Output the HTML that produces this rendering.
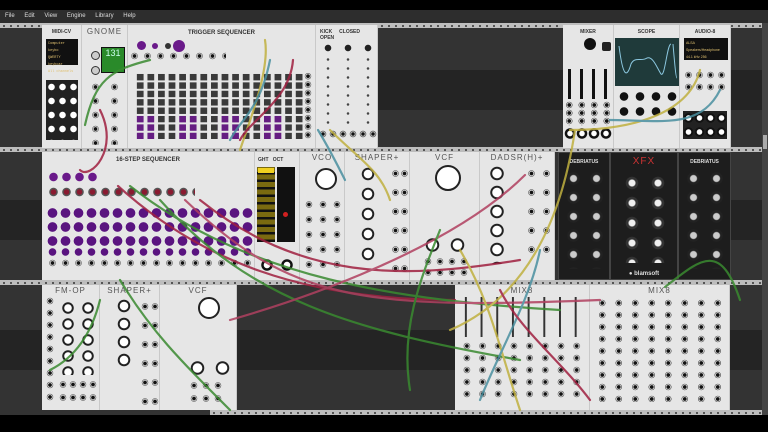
<!DOCTYPE html>
<html><head><style>
*{margin:0;padding:0;box-sizing:border-box}
body{width:768px;height:432px;overflow:hidden;background:#262626;font-family:"Liberation Sans",sans-serif;position:relative}
.a{position:absolute}
.top{left:0;top:0;width:768px;height:10px;background:#000}
.menu{left:0;top:10px;width:768px;height:13px;background:#2d2d2d;color:#ddd;font-size:6px;line-height:13px;padding-left:5px;word-spacing:8px}
.rail{height:5px;background:#bdbdbd repeating-linear-gradient(90deg,#bdbdbd 0 3px,#555 3px 5px,#bdbdbd 5px 7px);background-size:7px 2px;background-repeat:repeat-x;background-position:0 1.5px}
.row{background:#333}
.strip{background:#242424;height:40px}
.p{background:#e6e6e6;border-right:1px solid #c9c9c9}
.t{position:absolute;width:100%;text-align:center;color:#333;font-weight:bold;font-size:5px}
.T{position:absolute;width:100%;text-align:center;color:#555;font-size:8px;letter-spacing:1px}
.blk{background:#1d1d1d;border:1px solid #444}
.grid{background-image:radial-gradient(circle,#111 1.6px,#fff 2.2px,#444 3px,transparent 3.4px)}
</style></head><body>
<div class="a top"></div>
<div class="a menu">File Edit View Engine Library Help</div>
<div class="a row" style="left:0;top:23px;width:768px;height:392px"></div>
<div class="a strip" style="left:0;top:70px;width:768px"></div>
<div class="a strip" style="left:0;top:200px;width:768px"></div>
<div class="a strip" style="left:0;top:330px;width:768px"></div>
<div class="a rail" style="left:0;top:23px;width:762px"></div>
<div class="a rail" style="left:0;top:147px;width:762px"></div>
<div class="a rail" style="left:0;top:280px;width:762px"></div>
<div class="a rail" style="left:210px;top:410px;width:552px"></div>
<div class="a" style="left:0;top:415px;width:768px;height:17px;background:#000"></div>
<div class="a" style="left:762px;top:23px;width:6px;height:392px;background:#444"></div>
<div class="a" style="left:763px;top:135px;width:4px;height:14px;background:#aaa"></div>

<!-- ROW 1 -->
<div class="a p" style="left:42px;top:25px;width:40px;height:123px">
 <div class="t" style="top:4px">MIDI-CV</div>
 <div class="a" style="left:4px;top:14px;width:32px;height:26px;background:#111;color:#e0c070;font-size:3.5px;line-height:7px;padding:2px;font-family:'Liberation Mono',monospace">Computer keybo<br>QWERTY keyboar<br>All channels</div>
 <div class="a" style="left:4px;top:55px;width:32px;height:60px;background:#222 ;background-image:radial-gradient(circle,#fff 3px,#222 3.5px);background-size:11px 14px"></div>
</div>
<div class="a p" style="left:82px;top:25px;width:46px;height:123px">
 <div class="T" style="top:2px">GNOME</div>
 <div class="a" style="left:19px;top:22px;width:24px;height:26px;background:#2a8a2a;border:1px solid #111;color:#cfe;font-size:9px;text-align:center">131</div>
 <div class="a" style="left:9px;top:26px;width:9px;height:9px;border-radius:50%;background:#ccc;border:1px solid #333"></div>
 <div class="a" style="left:9px;top:41px;width:9px;height:9px;border-radius:50%;background:#ccc;border:1px solid #333"></div>
 <div class="a grid" style="left:4px;top:55px;width:38px;height:65px;background-size:19px 14px"></div>
</div>
<div class="a p" style="left:128px;top:25px;width:188px;height:123px">
 <div class="t" style="top:5px;font-size:6px">TRIGGER SEQUENCER</div>
 <div class="a" style="left:9px;top:16px;width:9px;height:9px;border-radius:50%;background:#6a1a8a"></div>
 <div class="a" style="left:24px;top:18px;width:6px;height:6px;border-radius:50%;background:#6a1a8a"></div>
 <div class="a" style="left:37px;top:18px;width:6px;height:6px;border-radius:50%;background:#333"></div>
 <div class="a" style="left:45px;top:15px;width:12px;height:12px;border-radius:50%;background:#6a1a8a"></div>
 <div class="a grid" style="left:0px;top:27px;width:98px;height:8px;background-size:13px 8px"></div>
 <div class="a" style="left:5px;top:47px;width:170px;height:67px;background:linear-gradient(#e6e6e6 0 2px,transparent 2px),linear-gradient(90deg,#e6e6e6 0 4px,#3a3a3a 4px);background-size:10.6px 8.4px,10.6px 8.4px"></div>
 <div class="a" style="left:5px;top:89px;width:170px;height:25px;background:linear-gradient(#e6e6e6 0 2px,transparent 2px),linear-gradient(90deg,#e6e6e6 0 4px,transparent 4px),linear-gradient(90deg,#6a1a8a 0 50%,transparent 50%);background-size:10.6px 8.4px,10.6px 8.4px,42.4px 8.4px;opacity:.9"></div>
 <div class="a grid" style="left:174px;top:47px;width:12px;height:67px;background-size:12px 8.4px"></div>
</div>
<div class="a p" style="left:316px;top:25px;width:62px;height:123px">
 <div class="t" style="top:4px;text-align:left;padding-left:4px">KICK &nbsp; &nbsp; CLOSED &nbsp; OPEN</div>
 <div class="a" style="left:2px;top:18px;width:60px;height:10px;background-image:radial-gradient(circle,#222 3px,transparent 3.5px);background-size:20px 10px"></div>
 <div class="a" style="left:2px;top:30px;width:60px;height:70px;background-image:radial-gradient(circle,#444 1px,transparent 1.5px);background-size:20px 9px"></div>
 <div class="a" style="left:2px;top:104px;width:60px;height:10px;background-image:radial-gradient(circle,#111 1.5px,#ddd 2px,#555 3px,transparent 3.5px);background-size:10px 10px"></div>
</div>
<div class="a p" style="left:563px;top:25px;width:51px;height:123px">
 <div class="t" style="top:4px">MIXER</div>
 <div class="a" style="left:21px;top:13px;width:12px;height:12px;border-radius:50%;background:#111"></div>
 <div class="a" style="left:39px;top:17px;width:9px;height:9px;background:#222;border-radius:2px"></div>
 <div class="a" style="left:0;top:44px;width:51px;height:30px;background-image:linear-gradient(90deg,transparent 5px,#111 5px 8px,transparent 8px);background-size:12px 30px"></div>
 <div class="a grid" style="left:0;top:76px;width:51px;height:25px;background-size:12.5px 8px"></div>
 <div class="a" style="left:1px;top:103px;width:48px;height:11px;background-image:radial-gradient(circle,#fff 2.5px,#111 3px 5px,transparent 5.5px);background-size:12px 11px"></div>
</div>
<div class="a p" style="left:614px;top:25px;width:66px;height:123px">
 <div class="t" style="top:4px">SCOPE</div>
 <div class="a" style="left:1px;top:13px;width:64px;height:48px;background:#1f3a3a"></div>
 <svg class="a" style="left:1px;top:13px" width="64" height="48"><path d="M4 8 C8 40,12 40,16 26 C20 18,26 24,32 20 C38 18,42 30,46 36 C50 40,52 6,56 6 M58 6 C60 30,61 40,62 40" stroke="#8cc8e0" fill="none" stroke-width="1"/></svg>
 <div class="a" style="left:2px;top:64px;width:64px;height:30px;background-image:radial-gradient(circle,#111 4px,transparent 4.5px);background-size:16px 15px"></div>
</div>
<div class="a p" style="left:680px;top:25px;width:51px;height:123px">
 <div class="t" style="top:4px">AUDIO-8</div>
 <div class="a" style="left:4px;top:13px;width:44px;height:22px;background:#111;color:#e0c070;font-size:3.5px;line-height:7px;padding:2px">ALSA<br>Speakers/Headphone<br>44.1 kHz 256</div>
 <div class="a grid" style="left:3px;top:44px;width:44px;height:24px;background-size:11px 12px"></div>
 <div class="a" style="left:3px;top:86px;width:44px;height:28px;background:#222;background-image:radial-gradient(circle,#fff 2.5px,#111 3px 4.5px,transparent 5px);background-size:11px 14px"></div>
</div>

<!-- ROW 2 -->
<div class="a p" style="left:42px;top:152px;width:213px;height:128px">
 <div class="t" style="top:5px;font-size:6px">16-STEP SEQUENCER</div>
 <div class="a" style="left:5px;top:19px;width:52px;height:12px;background-image:radial-gradient(circle,#6a1a8a 4px,transparent 4.5px);background-size:13px 12px"></div>
 <div class="a" style="left:5px;top:34px;width:148px;height:12px;background-image:radial-gradient(circle,#8a1a30 2.5px,#555 3px 4px,transparent 4.5px);background-size:13px 12px"></div>
 <div class="a" style="left:4px;top:54px;width:208px;height:44px;background-image:radial-gradient(circle,#5a1480 4.6px,transparent 5px);background-size:13px 14px"></div>
 <div class="a" style="left:4px;top:95px;width:208px;height:10px;background-image:radial-gradient(circle,#5a1480 3.5px,transparent 4px);background-size:13px 10px"></div>
 <div class="a grid" style="left:4px;top:105px;width:208px;height:12px;background-size:13px 12px"></div>
</div>
<div class="a p" style="left:255px;top:152px;width:45px;height:128px">
 <div class="t" style="top:5px;text-align:left;padding-left:3px">GHT &nbsp; OCT</div>
 <div class="a" style="left:2px;top:15px;width:18px;height:75px;background:#111;background-image:linear-gradient(#7a6a10 70%,transparent 70%);background-size:18px 7.5px"></div>
 <div class="a" style="left:3px;top:16px;width:16px;height:5px;background:#f0d020"></div>
 <div class="a" style="left:22px;top:15px;width:18px;height:75px;background:#111"></div>
 <div class="a" style="left:28px;top:60px;width:5px;height:5px;border-radius:50%;background:#d02020"></div>
 <div class="a" style="left:2px;top:106px;width:40px;height:14px;background-image:radial-gradient(circle,#fff 3px,#111 3.5px 5.5px,transparent 6px);background-size:20px 14px"></div>
</div>
<div class="a p" style="left:300px;top:152px;width:45px;height:128px">
 <div class="T" style="top:1px">VCO</div>
 <div class="a" style="left:15px;top:16px;width:22px;height:22px;border-radius:50%;background:#fff;border:2px solid #222"></div>
 <div class="a grid" style="left:2px;top:45px;width:42px;height:75px;background-size:14px 15px"></div>
</div>
<div class="a p" style="left:345px;top:152px;width:65px;height:128px">
 <div class="T" style="top:1px">SHAPER+</div>
 <div class="a" style="left:16px;top:12px;width:14px;height:100px;background-image:radial-gradient(circle,#fff 4px,#222 4.5px 6px,transparent 6.5px);background-size:14px 20px"></div>
 <div class="a grid" style="left:46px;top:12px;width:18px;height:108px;background-size:9px 19px"></div>
</div>
<div class="a p" style="left:410px;top:152px;width:70px;height:128px">
 <div class="T" style="top:1px">VCF</div>
 <div class="a" style="left:25px;top:13px;width:26px;height:26px;border-radius:50%;background:#fff;border:2px solid #222"></div>
 <div class="a" style="left:10px;top:86px;width:50px;height:14px;background-image:radial-gradient(circle,#fff 4.5px,#222 5px 6.5px,transparent 7px);background-size:25px 14px"></div>
 <div class="a grid" style="left:12px;top:104px;width:50px;height:22px;background-size:12px 11px"></div>
</div>
<div class="a p" style="left:480px;top:152px;width:75px;height:128px">
 <div class="T" style="top:1px">DADSR(H)+</div>
 <div class="a" style="left:10px;top:12px;width:14px;height:100px;background-image:radial-gradient(circle,#fff 4.5px,#222 5px 6.5px,transparent 7px);background-size:14px 19px"></div>
 <div class="a grid" style="left:44px;top:12px;width:30px;height:100px;background-size:15px 19px"></div>
</div>
<div class="a blk" style="left:558px;top:152px;width:52px;height:128px">
 <div class="t" style="top:6px;color:#ddd">DEBRIATUS</div>
 <div class="a" style="left:3px;top:16px;width:46px;height:100px;background-image:radial-gradient(circle,#ccc 3px,#222 4px 6px,transparent 6.5px);background-size:23px 19px"></div>
</div>
<div class="a blk" style="left:610px;top:152px;width:68px;height:128px">
 <div class="T" style="top:3px;color:#c33;font-size:10px">XFX</div>
 <div class="a" style="left:8px;top:20px;width:52px;height:90px;background-image:radial-gradient(circle,#eee 3px,#333 4px 6px,transparent 6.5px);background-size:26px 20px"></div>
 <div class="t" style="top:118px;color:#ddd;font-size:6px">● blamsoft</div>
</div>
<div class="a blk" style="left:678px;top:152px;width:53px;height:128px">
 <div class="t" style="top:6px;color:#ddd">DEBRIATUS</div>
 <div class="a" style="left:3px;top:16px;width:46px;height:100px;background-image:radial-gradient(circle,#ccc 3px,#222 4px 6px,transparent 6.5px);background-size:23px 19px"></div>
</div>

<!-- ROW 3 -->
<div class="a p" style="left:42px;top:285px;width:58px;height:125px">
 <div class="T" style="top:1px">FM-OP</div>
 <div class="a grid" style="left:2px;top:10px;width:12px;height:110px;background-size:12px 12px"></div>
 <div class="a" style="left:16px;top:15px;width:40px;height:75px;background-image:radial-gradient(circle,#fff 3.5px,#222 4px 5.5px,transparent 6px);background-size:20px 16px"></div>
 <div class="a grid" style="left:16px;top:93px;width:40px;height:26px;background-size:10px 13px"></div>
</div>
<div class="a p" style="left:100px;top:285px;width:60px;height:125px">
 <div class="T" style="top:1px">SHAPER+</div>
 <div class="a" style="left:17px;top:12px;width:14px;height:70px;background-image:radial-gradient(circle,#fff 4px,#222 4.5px 6px,transparent 6.5px);background-size:14px 18px"></div>
 <div class="a grid" style="left:40px;top:12px;width:20px;height:110px;background-size:10px 19px"></div>
</div>
<div class="a p" style="left:160px;top:285px;width:77px;height:125px">
 <div class="T" style="top:1px">VCF</div>
 <div class="a" style="left:38px;top:12px;width:22px;height:22px;border-radius:50%;background:#fff;border:2px solid #222"></div>
 <div class="a" style="left:25px;top:75px;width:50px;height:16px;background-image:radial-gradient(circle,#fff 4.5px,#222 5px 6.5px,transparent 7px);background-size:25px 16px"></div>
 <div class="a grid" style="left:28px;top:94px;width:36px;height:26px;background-size:12px 13px"></div>
</div>
<div class="a p" style="left:455px;top:285px;width:135px;height:125px">
 <div class="T" style="top:1px">MIX8</div>
 <div class="a" style="left:4px;top:12px;width:126px;height:40px;background-image:linear-gradient(90deg,transparent 6px,#333 6px 8px,transparent 8px);background-size:15.7px 40px"></div>
 <div class="a grid" style="left:4px;top:55px;width:126px;height:60px;background-size:15.7px 12px"></div>
</div>
<div class="a p" style="left:590px;top:285px;width:140px;height:125px">
 <div class="T" style="top:1px">MIX8</div>
 <div class="a grid" style="left:4px;top:12px;width:132px;height:105px;background-size:16.5px 12px"></div>
</div>

<svg class="a" style="left:0;top:0" width="768" height="432" fill="none" stroke-width="2.2" stroke-linecap="round" opacity=".85">
<path d="M85 125 C95 80,110 70,150 60" stroke="#3a8a30"/>
<path d="M100 110 C120 150,90 180,80 170" stroke="#a02040"/>
<path d="M265 40 C270 70,250 120,240 150" stroke="#c0b040"/>
<path d="M293 60 C290 100,250 120,240 140" stroke="#a02040"/>
<path d="M270 60 C260 110,240 120,230 140" stroke="#4a90a0"/>
<path d="M318 130 C330 150,340 170,345 180" stroke="#4a90a0"/>
<path d="M330 130 C360 160,380 170,390 200" stroke="#c0b040"/>
<path d="M118 186 C200 260,300 300,455 300" stroke="#a02040"/>
<path d="M130 186 C250 280,400 300,560 310" stroke="#3a8a30"/>
<path d="M200 200 C300 280,400 280,520 260" stroke="#a02040"/>
<path d="M160 200 C250 300,350 330,520 360" stroke="#3a8a30"/>
<path d="M185 200 C290 300,360 310,600 300" stroke="#b04060"/>
<path d="M525 175 C450 250,300 300,230 320" stroke="#b04060"/>
<path d="M700 70 C690 110,640 130,570 130" stroke="#c0b040"/>
<path d="M575 130 C560 230,520 300,450 330" stroke="#c0b040"/>
<path d="M720 90 C700 130,660 120,610 120" stroke="#4a90a0"/>
<path d="M665 287 C700 260,720 240,740 300" stroke="#3a8a30"/>
<path d="M120 280 C150 330,180 360,230 410" stroke="#3a8a30"/>
<path d="M100 300 C90 340,70 360,50 370" stroke="#3a8a30"/>
<path d="M440 230 C420 280,400 330,410 390" stroke="#3a8a30"/>
<path d="M460 250 C490 300,500 350,520 410" stroke="#c0b040"/>
<path d="M540 250 C530 300,500 350,480 400" stroke="#4a90a0"/>
<path d="M500 290 C520 330,560 360,590 400" stroke="#a02040"/>
</svg>
</body></html>
